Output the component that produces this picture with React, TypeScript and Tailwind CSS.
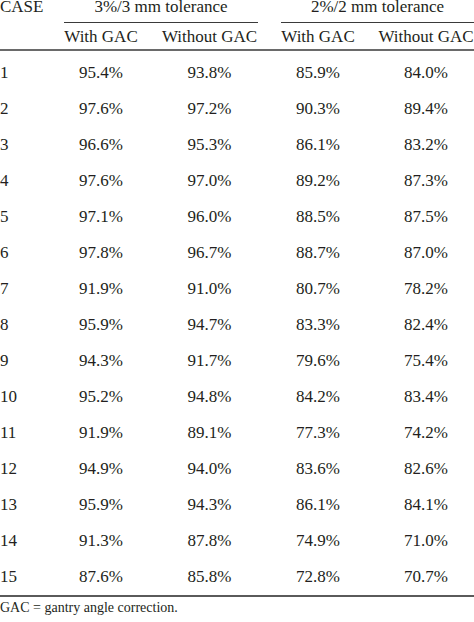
import React from "react";

const rows: [string, string, string, string, string][] = [
  ["1", "95.4%", "93.8%", "85.9%", "84.0%"],
  ["2", "97.6%", "97.2%", "90.3%", "89.4%"],
  ["3", "96.6%", "95.3%", "86.1%", "83.2%"],
  ["4", "97.6%", "97.0%", "89.2%", "87.3%"],
  ["5", "97.1%", "96.0%", "88.5%", "87.5%"],
  ["6", "97.8%", "96.7%", "88.7%", "87.0%"],
  ["7", "91.9%", "91.0%", "80.7%", "78.2%"],
  ["8", "95.9%", "94.7%", "83.3%", "82.4%"],
  ["9", "94.3%", "91.7%", "79.6%", "75.4%"],
  ["10", "95.2%", "94.8%", "84.2%", "83.4%"],
  ["11", "91.9%", "89.1%", "77.3%", "74.2%"],
  ["12", "94.9%", "94.0%", "83.6%", "82.6%"],
  ["13", "95.9%", "94.3%", "86.1%", "84.1%"],
  ["14", "91.3%", "87.8%", "74.9%", "71.0%"],
  ["15", "87.6%", "85.8%", "72.8%", "70.7%"],
];

export default function App() {
  return (
    <div className="w-[474px] h-[622px] overflow-hidden bg-white text-[#231f20] font-['Liberation_Serif',serif]">
      <div className="grid grid-cols-[41px_74px_97px_74px_96px] gap-x-[23px] text-[17px]">
        <div className="leading-[14px] whitespace-nowrap">CASE</div>
        <div className="col-span-2 leading-[14px] pb-[8px] border-b border-[#3a3a3a] text-center whitespace-nowrap">
          3%/3 mm tolerance
        </div>
        <div className="col-span-2 leading-[14px] pb-[8px] border-b border-[#3a3a3a] text-center whitespace-nowrap">
          2%/2 mm tolerance
        </div>
        <div />
        <div className="pt-[2px] leading-[24px] text-center whitespace-nowrap">With GAC</div>
        <div className="pt-[2px] leading-[24px] text-center whitespace-nowrap">Without GAC</div>
        <div className="pt-[2px] leading-[24px] text-center whitespace-nowrap">With GAC</div>
        <div className="pt-[2px] leading-[24px] text-center whitespace-nowrap">Without GAC</div>
      </div>
      <div className="h-[2px] bg-[#6a6a6a]" />
      <div className="pt-[4px] grid grid-cols-[41px_74px_97px_74px_96px] gap-x-[23px] text-[17px]">
        {rows.map((r) => (
          <React.Fragment key={r[0]}>
            <div className="h-[36px] leading-[36px]">{r[0]}</div>
            <div className="h-[36px] leading-[36px] text-center">{r[1]}</div>
            <div className="h-[36px] leading-[36px] text-center">{r[2]}</div>
            <div className="h-[36px] leading-[36px] text-center">{r[3]}</div>
            <div className="h-[36px] leading-[36px] text-center">{r[4]}</div>
          </React.Fragment>
        ))}
      </div>
      <div className="h-[2px] bg-[#5a5a5a]" />
      <div className="mt-[3px] text-[14px] leading-[16px] whitespace-nowrap">
        GAC = gantry angle correction.
      </div>
    </div>
  );
}
